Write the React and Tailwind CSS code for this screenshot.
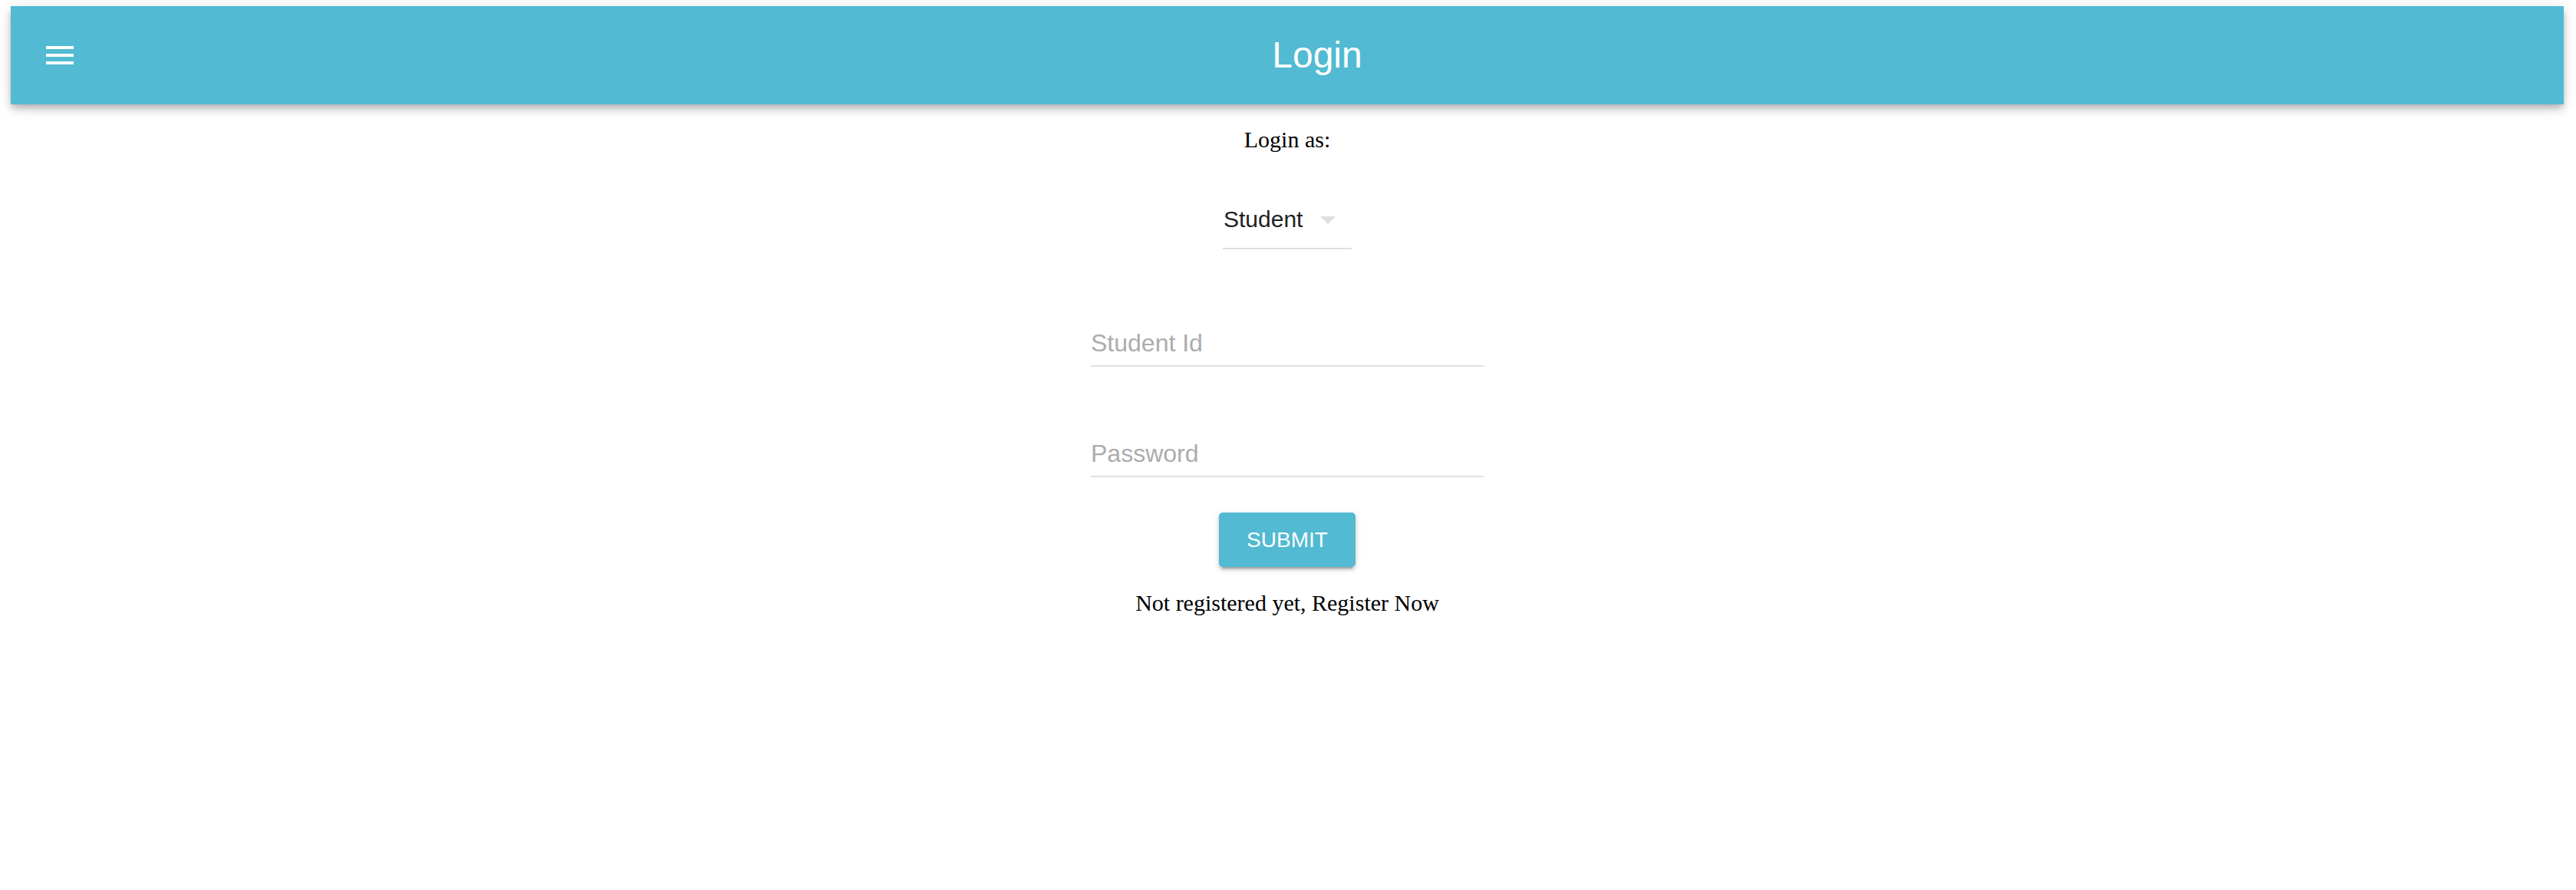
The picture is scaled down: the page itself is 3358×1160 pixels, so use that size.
import React, { useState } from 'react';

const MenuIcon = () => (
  <svg width="48" height="48" viewBox="0 0 24 24" fill="#ffffff" aria-hidden="true">
    <path d="M3 18h18v-2H3v2zm0-5h18v-2H3v2zm0-7v2h18V6H3z" />
  </svg>
);

const Header = () => (
  <header className="ml-[14px] mr-[16px] mt-[8px] flex h-[128px] items-center bg-[#52bad2] shadow-[0_4px_8px_-2px_rgba(0,0,0,0.2),0_8px_10px_0_rgba(0,0,0,0.12),0_2px_20px_0_rgba(0,0,0,0.1)]">
    <button className="ml-[40px] flex h-[48px] w-[48px] items-center justify-center">
      <MenuIcon />
    </button>
    <h1 className="flex-1 pr-[10px] text-center font-['Liberation_Sans',Arial,sans-serif] text-[48px] leading-[56px] font-normal text-white">
      Login
    </h1>
  </header>
);

const UnderlineInput = ({ placeholder, type = 'text' }) => (
  <input
    type={type}
    placeholder={placeholder}
    className="block w-[512px] border-b-2 border-[#e0e0e0] bg-transparent pb-[10px] font-['Liberation_Sans',Arial,sans-serif] text-[32px] leading-[38px] text-[#212121] outline-none placeholder:text-[#acacac]"
  />
);

export default function App() {
  const [role] = useState('Student');

  return (
    <div className="min-h-[1160px] bg-white">
      <Header />

      <div className="flex flex-col items-center pr-[2px]">
        {/* Role picker */}
        <p className="mt-[29px] font-['Liberation_Serif','Times_New_Roman',serif] text-[30px] leading-[34px] text-black">
          Login as:
        </p>

        <div className="mt-[69px] flex w-[168px] items-start border-b-2 border-[#e0e0e0] pb-[19px] pl-[1px]">
          <span className="font-['Liberation_Sans',Arial,sans-serif] text-[30px] leading-[36px] text-[#212121]">
            {role}
          </span>
          <svg className="ml-[23px] mt-[14px]" width="20" height="10" viewBox="0 0 20 10" aria-hidden="true">
            <polygon points="0,0 20,0 10,10" fill="#dedede" />
          </svg>
        </div>

        {/* Credentials */}
        <div className="mt-[103px]">
          <UnderlineInput placeholder="Student Id" />
        </div>
        <div className="mt-[94px]">
          <UnderlineInput placeholder="Password" type="password" />
        </div>

        <button className="mt-[46px] h-[71px] w-[178px] rounded-[5px] bg-[#52bad2] font-['Liberation_Sans',Arial,sans-serif] text-[28px] uppercase text-white shadow-[0_6px_2px_-4px_rgba(0,0,0,0.2),0_4px_4px_0_rgba(0,0,0,0.14),0_2px_10px_0_rgba(0,0,0,0.12)]">
          Submit
        </button>

        <p className="mt-[30px] font-['Liberation_Serif','Times_New_Roman',serif] text-[30px] leading-[34px] text-black">
          Not registered yet, Register Now
        </p>
      </div>
    </div>
  );
}
